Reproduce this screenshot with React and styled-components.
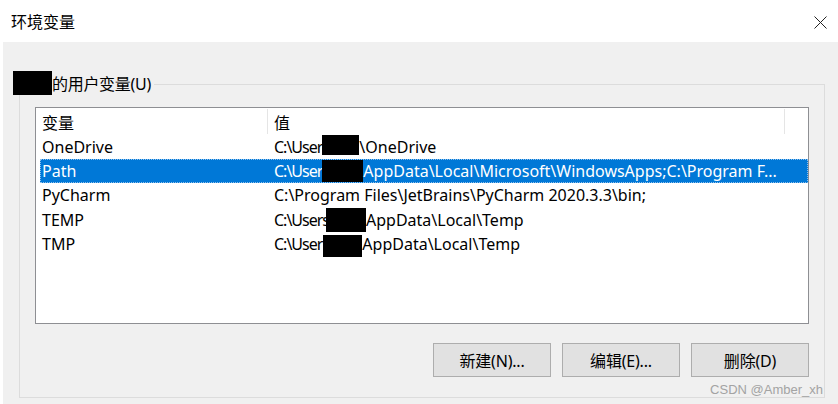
import React from "react";
import styled, { createGlobalStyle } from "styled-components";

const GlobalStyle = createGlobalStyle`
  html, body {
    margin: 0;
    padding: 0;
    background: #ffffff;
  }
  body {
    font-family: "Noto Sans", "Noto Sans CJK SC", sans-serif;
    font-size: 16px;
    color: #000;
  }
`;

const Window = styled.div`
  width: 838px;
  height: 404px;
  display: flex;
  flex-direction: column;
  background: #ffffff;
  position: relative;
  overflow: hidden;
`;

const TitleBar = styled.div`
  height: 42px;
  display: flex;
  align-items: center;
  justify-content: space-between;
  padding: 0 11px 0 11px;
  box-sizing: border-box;
`;

const Title = styled.div`
  font-size: 16px;
  line-height: 1;
  margin-top: 1px;
`;

const CloseButton = styled.div`
  width: 14px;
  height: 14px;
  display: flex;
  align-items: center;
  justify-content: center;
  margin-top: 2px;
`;

const Body = styled.div`
  flex: 1;
  margin-left: 3px;
  background: #f0f0f0;
  padding: 42px 13px 0 16px;
`;

const GroupBox = styled.div`
  border: 1px solid #dcdcdc;
  padding: 0 15px 20px 15px;
`;

const Legend = styled.div`
  display: flex;
  align-items: center;
  width: fit-content;
  height: 24px;
  margin: -14px 0 0 -22px;
  padding-right: 3px;
  background: #f0f0f0;
  font-size: 16px;
  letter-spacing: -0.3px;
`;

const Redact = styled.span`
  display: inline-block;
  flex: none;
  background: #000;
  width: ${(p) => p.$w}px;
  height: ${(p) => p.$h}px;
  align-self: flex-start;
  margin-top: ${(p) => p.$top || 0}px;
  margin-left: ${(p) => p.$ml || 0}px;
`;

const ListBox = styled.div`
  margin-top: 12px;
  height: 217px;
  box-sizing: border-box;
  border: 1px solid #8e8f93;
  background: #ffffff;
  padding-left: 4px;
`;

const HeaderRow = styled.div`
  display: grid;
  grid-template-columns: 227px 518px;
  height: 27px;
`;

const HeaderCell = styled.div`
  display: flex;
  align-items: center;
  padding-left: ${(p) => (p.$first ? 2 : 6)}px;
  border-left: ${(p) => (p.$first ? "none" : "1px solid #e5e5e5")};
  border-right: ${(p) => (p.$first ? "none" : "1px solid #e5e5e5")};
  margin: 1px 0 1px 0;
`;

const Row = styled.div`
  display: grid;
  grid-template-columns: 227px 518px;
  height: 24px;
  background: ${(p) => (p.$selected ? "#0078d7" : "transparent")};
  color: ${(p) => (p.$selected ? "#ffffff" : "#000000")};
  outline: ${(p) => (p.$selected ? "1px dotted #8fc0ec" : "none")};
  outline-offset: -1px;
`;

const Cell = styled.div`
  display: flex;
  align-items: center;
  white-space: pre;
  padding-left: ${(p) => (p.$first ? 2 : 7)}px;
  overflow: visible;
`;

const PathHead = styled.span`
  letter-spacing: -1px;
`;

const ButtonRow = styled.div`
  display: flex;
  justify-content: flex-end;
  gap: 11px;
  margin-top: 19px;
`;

const Button = styled.div`
  width: 118px;
  height: 34px;
  box-sizing: border-box;
  background: #e1e1e1;
  border: 1px solid #adadad;
  display: flex;
  align-items: center;
  justify-content: center;
  font-size: 16px;
  letter-spacing: -0.2px;
`;

const Watermark = styled.div`
  position: absolute;
  right: 15px;
  bottom: 7px;
  font-family: "Liberation Sans", Arial, sans-serif;
  font-size: 13px;
  color: #a3a3a3;
`;

const rows = [
  { name: "OneDrive", pre: "C:\\User", box: { w: 37, h: 20, top: 0 }, post: "\\OneDrive" },
  {
    name: "Path",
    pre: "C:\\User",
    box: { w: 41, h: 22, top: 1 },
    post: "AppData\\Local\\Microsoft\\WindowsApps;C:\\Program F...",
    selected: true,
  },
  { name: "PyCharm", post: "C:\\Program Files\\JetBrains\\PyCharm 2020.3.3\\bin;" },
  { name: "TEMP", pre: "C:\\Users", box: { w: 40, h: 24, top: 1, ml: -3 }, post: "AppData\\Local\\Temp" },
  { name: "TMP", pre: "C:\\User", box: { w: 39, h: 22, top: 4, ml: 1 }, post: "AppData\\Local\\Temp" },
];

export default function App() {
  return (
    <>
      <GlobalStyle />
      <Window>
        <TitleBar>
          <Title>环境变量</Title>
          <CloseButton>
            <svg width="13" height="13" viewBox="0 0 13 13">
              <path d="M0.5 0.5 L12.5 12.5 M12.5 0.5 L0.5 12.5" stroke="#222" strokeWidth="1" fill="none" />
            </svg>
          </CloseButton>
        </TitleBar>
        <Body>
          <GroupBox>
            <Legend>
              <Redact $w={39} $h={24} />
              的用户变量(U)
            </Legend>
            <ListBox>
              <HeaderRow>
                <HeaderCell $first>变量</HeaderCell>
                <HeaderCell>值</HeaderCell>
              </HeaderRow>
              {rows.map((r) => (
                <Row key={r.name} $selected={r.selected}>
                  <Cell $first>{r.name}</Cell>
                  <Cell>
                    {r.pre && <PathHead>{r.pre}</PathHead>}
                    {r.box && (
                      <Redact $w={r.box.w} $h={r.box.h} $top={r.box.top} $ml={r.box.ml} />
                    )}
                    {r.post}
                  </Cell>
                </Row>
              ))}
            </ListBox>
            <ButtonRow>
              <Button>新建(N)...</Button>
              <Button>编辑(E)...</Button>
              <Button>删除(D)</Button>
            </ButtonRow>
          </GroupBox>
        </Body>
        <Watermark>CSDN @Amber_xh</Watermark>
      </Window>
    </>
  );
}
